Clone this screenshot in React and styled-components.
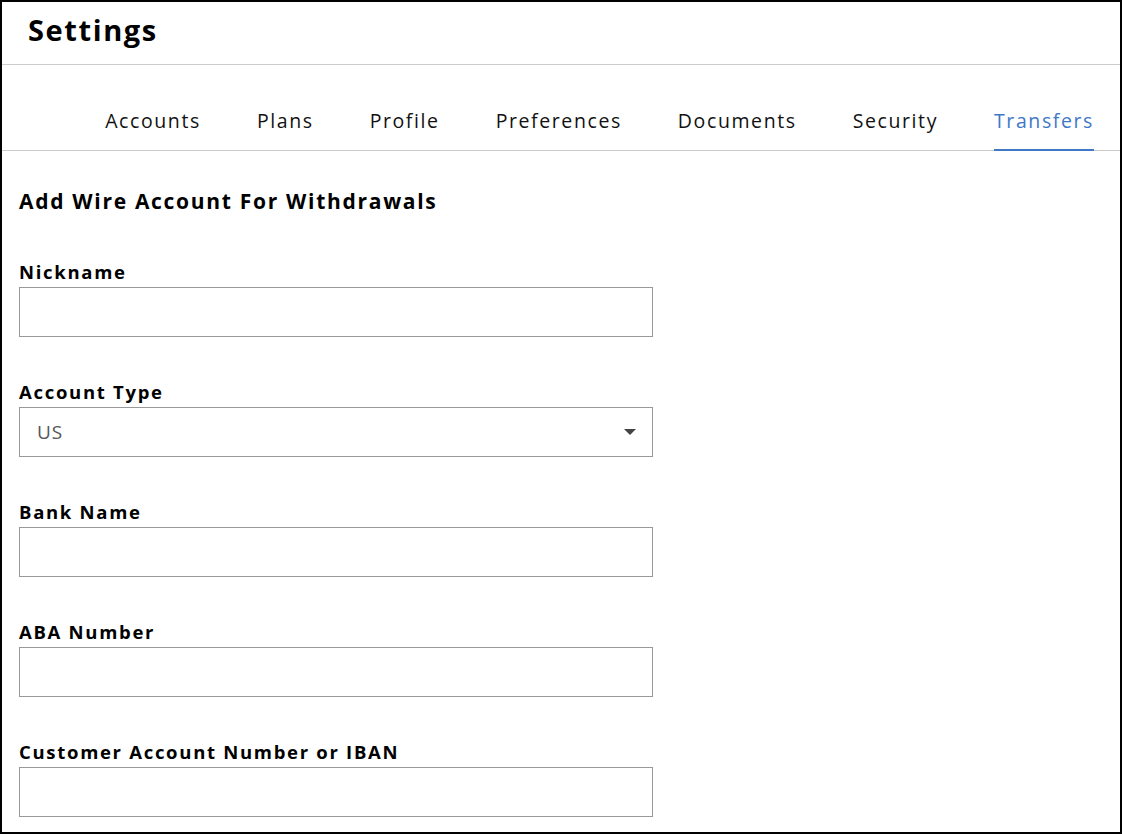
import React from "react";
import styled, { createGlobalStyle } from "styled-components";

const Global = createGlobalStyle`
  html, body { margin: 0; padding: 0; background: #fff; }
  * { box-sizing: border-box; }
  body { font-family: "Open Sans", "Liberation Sans", sans-serif; color: #000; }
`;

const Frame = styled.div`
  width: 1122px; height: 834px; border: 2px solid #000; overflow: hidden;
  display: flex; flex-direction: column;
  & > * { flex-shrink: 0; }
`;
const Header = styled.header`
  height: 63px; padding: 10px 0 0 26px; border-bottom: 1px solid #ccc;
`;
const Title = styled.h1`
  margin: 0; font-size: 29px; font-weight: 700; line-height: 36px; letter-spacing: 1.6px;
`;
const Tabs = styled.nav`
  height: 86px; border-bottom: 1px solid #ccc; display: flex; justify-content: flex-end;
  align-items: flex-end; gap: 56px; padding-right: 26px;
`;
const Tab = styled.div`
  font-size: 19.5px; letter-spacing: 1.6px; padding-bottom: 15px; line-height: 26px;
  color: ${p => (p.$active ? "#3f78c7" : "#111")};
  border-bottom: 2px solid ${p => (p.$active ? "#3f78c7" : "transparent")};
  margin-bottom: -1px;
`;
const Body = styled.main`
  padding: 36px 0 0 17px; display: flex; flex-direction: column;
`;
const SectionTitle = styled.h2`
  margin: 0 0 45px; font-size: 21px; font-weight: 700; line-height: 28px; letter-spacing: 1.7px;
`;
const Field = styled.div`
  display: flex; flex-direction: column; margin-bottom: 43px;
`;
const Label = styled.label`
  font-size: 18.5px; font-weight: 700; line-height: 24px; margin-bottom: 3px; letter-spacing: 1.7px;
`;
const Box = styled.div`
  width: 634px; height: 50px; border: 1px solid #999; display: flex; align-items: center;
  justify-content: space-between; padding: 0 16px 0 17px; font-size: 19px; color: #555;
  letter-spacing: 1px;
`;
const Caret = styled.span`
  width: 0; height: 0; border-left: 6px solid transparent; border-right: 6px solid transparent;
  border-top: 6px solid #444;
`;

const tabs = ["Accounts", "Plans", "Profile", "Preferences", "Documents", "Security", "Transfers"];
const fields = ["Nickname", "Account Type", "Bank Name", "ABA Number", "Customer Account Number or IBAN"];

export default function App() {
  return (
    <>
      <Global />
      <Frame>
        <Header><Title>Settings</Title></Header>
        <Tabs>
          {tabs.map(t => <Tab key={t} $active={t === "Transfers"}>{t}</Tab>)}
        </Tabs>
        <Body>
          <SectionTitle>Add Wire Account For Withdrawals</SectionTitle>
          {fields.map(f => (
            <Field key={f}>
              <Label>{f}</Label>
              {f === "Account Type" ? <Box>US<Caret /></Box> : <Box />}
            </Field>
          ))}
        </Body>
      </Frame>
    </>
  );
}
